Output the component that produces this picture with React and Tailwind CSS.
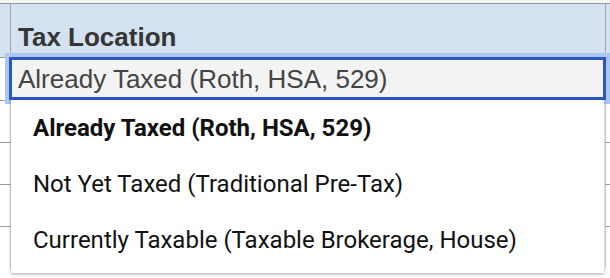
import { useState } from 'react';

const opciones = [
  'Already Taxed (Roth, HSA, 529)',
  'Not Yet Taxed (Traditional Pre-Tax)',
  'Currently Taxable (Taxable Brokerage, House)',
];

function Fila({ alto, primera }) {
  return (
    <div className={`flex ${alto}`}>
      <div className={`w-[11px] border-r border-[#d9d9d9] ${primera ? '' : 'border-t border-t-[#9a9a9a]'}`} />
      <div className="flex-1" />
      <div className={`w-[5px] border-l border-[#d9d9d9] ${primera ? '' : 'border-t border-t-[#9a9a9a]'}`} />
    </div>
  );
}

export default function App() {
  const [valor] = useState(opciones[0]);

  return (
    <div className="relative w-[610px] h-[278px] overflow-hidden bg-white font-['Liberation_Sans',Arial,sans-serif]">
      <div className="h-[3px] bg-[#f4f4f4]" />
      <div className="border-t border-[#9c9c9c]">
        <div className="flex h-[53px] bg-[#d4e1f0]">
          <div className="w-[11px] border-r border-[#a8a8a8]" />
          <div className="flex-1 flex items-end pl-[7px] pb-[7px]">
            <span className="text-[26px] font-bold text-[#353535] leading-none">Tax Location</span>
          </div>
          <div className="w-[5px] border-l border-[#a8a8a8]" />
        </div>
        <Fila alto="h-[43px] border-t border-[#9a9a9a]" primera />
        <Fila alto="h-[42px]" />
        <Fila alto="h-[42px]" />
        <Fila alto="h-[42px]" />
        <Fila alto="h-[42px]" />
      </div>

      {/* celda en edición */}
      <div className="absolute left-[9px] top-[57px] w-[597px] h-[43px] border-[3px] border-[#2a57c2] bg-[#f3f3f3] ring-4 ring-[#aac6f1] flex items-center pl-[6px]">
        <span className="text-[26px] text-[#444] leading-none">{valor}</span>
      </div>

      {/* menú desplegable */}
      <div className="absolute left-[11px] top-[100px] w-[593px] h-[173px] bg-white shadow-[0_1px_3px_rgba(0,0,0,0.35)] font-['Roboto',sans-serif]">
        {opciones.map((o, i) => (
          <div key={o} className={`h-[56px] flex items-center pl-[22px] text-[24px] text-[#111] ${i === 0 ? 'font-bold' : ''}`}>
            {o}
          </div>
        ))}
      </div>
    </div>
  );
}
